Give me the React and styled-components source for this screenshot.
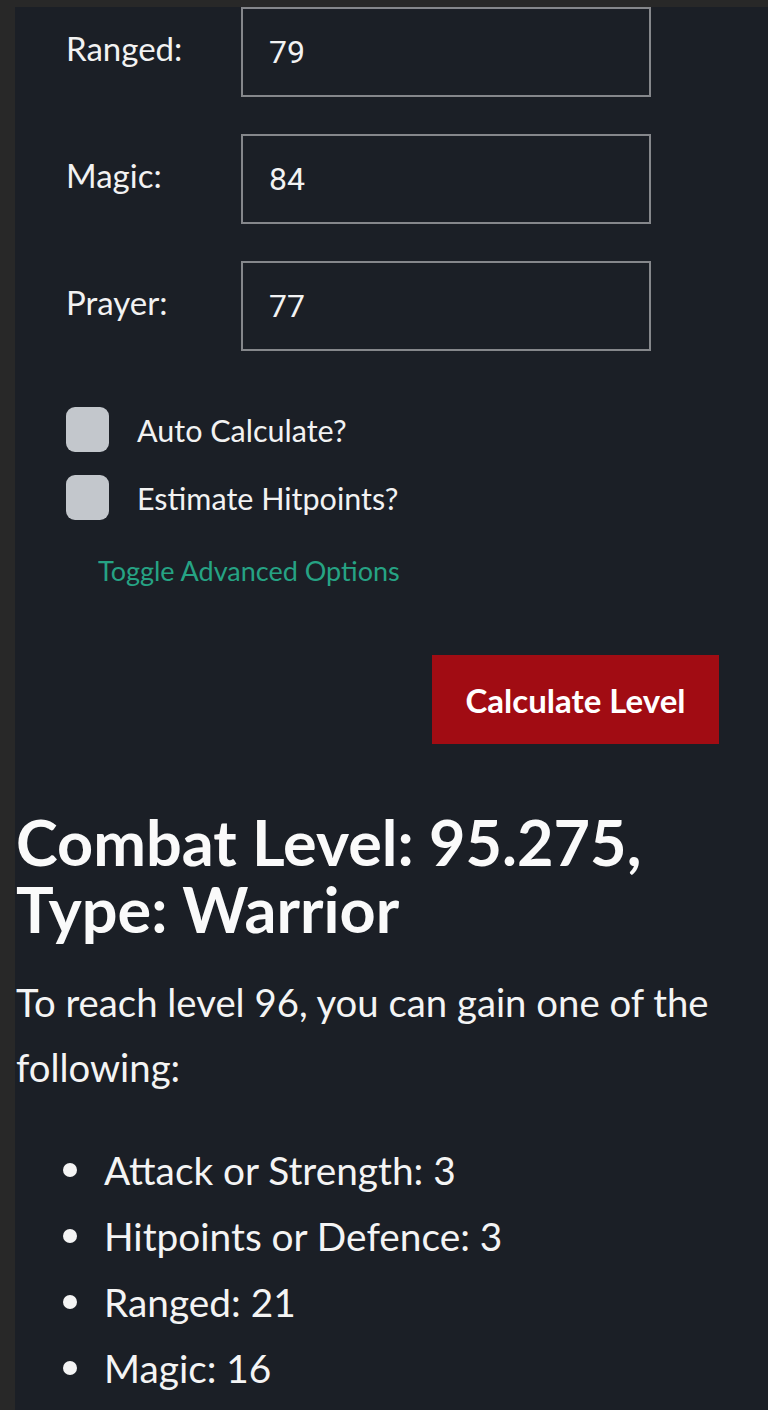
import React from 'react'
import styled, { createGlobalStyle } from 'styled-components'

const GlobalStyle = createGlobalStyle`
  html, body {
    margin: 0;
    padding: 0;
    background: #282828;
  }
  body {
    font-family: Lato, "Noto Sans", sans-serif;
  }
`

const Frame = styled.div`
  padding: 7px 0 0 15px;
  min-height: 1410px;
  box-sizing: border-box;
`

const Panel = styled.div`
  background: #1b1f26;
  min-height: 1403px;
  color: #f4f4f4;
  padding: 0 0 40px 1px;
  box-sizing: border-box;
`

const Form = styled.form`
  padding-left: 50px;
  padding-right: 49px;
  display: flex;
  flex-direction: column;
`

const Row = styled.div`
  display: flex;
  align-items: center;
  height: 90px;
  margin-bottom: 37px;
`

const Label = styled.label`
  width: 175px;
  font-size: 33px;
  color: #f2f2f2;
  margin-top: -8px;
`

const Input = styled.input`
  width: 410px;
  height: 90px;
  box-sizing: border-box;
  background: #1b1f26;
  border: 2px solid #85878b;
  color: #f2f2f2;
  font-family: Roboto, "Liberation Sans", sans-serif;
  font-size: 32px;
  padding: 0 0 0 26px;
  outline: none;
`

const CheckRow = styled.label`
  display: flex;
  align-items: center;
  gap: 28px;
  font-size: 30.5px;
  color: #f2f2f2;
  margin-top: ${p => p.first ? '19px' : '23px'};
`

const Box = styled.span`
  width: 43px;
  height: 45px;
  border-radius: 9px;
  background: #c3c7cc;
  flex-shrink: 0;
`

const Toggle = styled.a`
  display: block;
  margin: 34px 0 0 32px;
  color: #26a384;
  font-size: 27px;
  text-decoration: none;
`

const ButtonBar = styled.div`
  display: flex;
  justify-content: flex-end;
  margin-top: 68px;
`

const Button = styled.button`
  width: 287px;
  height: 89px;
  border: none;
  background: #a10c13;
  color: #fff;
  font-family: Lato, "Noto Sans", sans-serif;
  font-weight: 700;
  font-size: 33px;
`

const Heading = styled.h2`
  margin: 64px 0 0;
  font-size: 63px;
  line-height: 67px;
  font-weight: 700;
  color: #fafafa;
`

const Text = styled.p`
  margin: 28px 0 0;
  font-size: 38.3px;
  line-height: 65px;
  color: #f4f4f4;
`

const List = styled.ul`
  margin: 37px 0 0;
  padding-left: 47px;
  list-style: none;
  font-size: 38.8px;
  line-height: 66px;
  color: #f4f4f4;
`

const Item = styled.li`
  display: flex;
  align-items: center;
  &::before {
    content: '';
    width: 14px;
    height: 14px;
    border-radius: 50%;
    background: #f4f4f4;
    margin-right: 27px;
    flex-shrink: 0;
  }
`

const skills = [
  { name: 'Ranged', value: '79' },
  { name: 'Magic', value: '84' },
  { name: 'Prayer', value: '77' },
]

const gains = [
  'Attack or Strength: 3',
  'Hitpoints or Defence: 3',
  'Ranged: 21',
  'Magic: 16',
]

const App = () => {
  return (
    <Frame>
      <GlobalStyle />
      <Panel>
        <Form onSubmit={e => e.preventDefault()}>
          {skills.map(s => (
            <Row key={s.name}>
              <Label>{s.name}:</Label>
              <Input defaultValue={s.value} />
            </Row>
          ))}
          <CheckRow first>
            <Box />
            Auto Calculate?
          </CheckRow>
          <CheckRow>
            <Box />
            Estimate Hitpoints?
          </CheckRow>
          <Toggle href="#">Toggle Advanced Options</Toggle>
          <ButtonBar>
            <Button type="submit">Calculate Level</Button>
          </ButtonBar>
        </Form>
        <Heading>Combat Level: 95.275,<br />Type: Warrior</Heading>
        <Text>To reach level 96, you can gain one of the following:</Text>
        <List>
          {gains.map(g => <Item key={g}>{g}</Item>)}
        </List>
      </Panel>
    </Frame>
  )
}

export default App
